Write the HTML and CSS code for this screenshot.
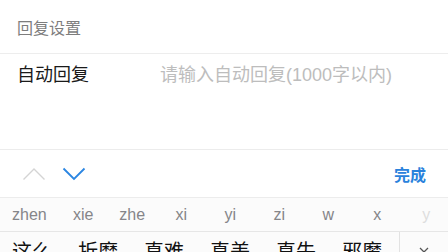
FILE: index.html
```html
<!DOCTYPE html>
<html>
  <head>
    <meta charset="UTF-8">
    <meta name="viewport" content="width=device-width, initial-scale=1.0">
    <link rel="stylesheet" href="styles.css">
  </head>
  <body>
    <div class="form">
      <div class="sectionTitle">回复设置</div>
      <div class="replyRow">
        <div class="replyLabel">自动回复</div>
        <div class="replyInput">请输入自动回复(1000字以内)</div>
      </div>
    </div>

    <div class="toolbar">
      <svg class="arrow" width="24" height="14" viewBox="0 0 24 14">
        <polyline points="1.5,12.5 12,2 22.5,12.5" fill="none" stroke="#d4d4d4" stroke-width="1.4"/>
      </svg>
      <svg class="arrow" width="24" height="14" viewBox="0 0 24 14">
        <polyline points="1.5,1.5 12,12 22.5,1.5" fill="none" stroke="#2b86e2" stroke-width="1.8"/>
      </svg>
      <div class="toolbarDone">完成</div>
    </div>

    <div class="keyboard">
      <div class="pinyinRow">
        <span class="pinyin pinyinFirst">zhen</span>
        <span class="pinyin">xie</span>
        <span class="pinyin">zhe</span>
        <span class="pinyin">xi</span>
        <span class="pinyin">yi</span>
        <span class="pinyin">zi</span>
        <span class="pinyin">w</span>
        <span class="pinyin">x</span>
        <span class="pinyin pinyinFaded">y</span>
      </div>
      <div class="candidateRow">
        <div class="candidates">
          <span class="candidate">这么</span>
          <span class="candidate">折磨</span>
          <span class="candidate">真难</span>
          <span class="candidate">真美</span>
          <span class="candidate">真失</span>
          <span class="candidate">邪魔</span>
        </div>
        <div class="candidateMore">
          <svg width="10" height="6" viewBox="0 0 10 6">
            <polyline points="1,1 5,5 9,1" fill="none" stroke="#555" stroke-width="1.3"/>
          </svg>
        </div>
      </div>
    </div>
  </body>
</html>
```

FILE: styles.css
```css
html {
  font-family: "Liberation Sans", "Noto Sans CJK SC", sans-serif;
  width: 100%;
  height: 100%;
  margin: 0;
  padding: 0;
  overflow: hidden;
}
body {
  width: 100%;
  height: 100%;
  margin: 0;
  padding: 0;
  background: #fff;
}

.form {
  height: 150px;
  border-bottom: 1px solid #ececec;
  box-sizing: border-box;
}
.sectionTitle {
  height: 54px;
  display: flex;
  align-items: center;
  padding-left: 17px;
  font-size: 16px;
  color: #7d7d7d;
  border-bottom: 1px solid #ededed;
  box-sizing: border-box;
}
.replyRow {
  display: flex;
  padding: 9px 0 0 17px;
  font-size: 18px;
  line-height: 24px;
}
.replyLabel {
  width: 143px;
  color: #1a1a1a;
}
.replyInput {
  color: #bdbdbd;
}

.toolbar {
  height: 47px;
  display: flex;
  align-items: center;
  padding: 0 22px;
  gap: 16px;
  border-bottom: 1px solid #ececec;
}
.arrow {
  display: block;
}
.toolbarDone {
  margin-left: auto;
  color: #2a82dc;
  font-size: 16px;
  font-weight: bold;
}

.keyboard {
  background: #fbfbfb;
}
.pinyinRow {
  height: 33px;
  display: flex;
  align-items: center;
  padding-left: 12px;
  font-size: 16px;
  color: #858589;
  border-bottom: 1px solid #e6e6e6;
  white-space: nowrap;
}
.pinyin {
  flex: 0 0 49px;
  text-align: center;
}
.pinyinFirst {
  flex: 0 0 auto;
  margin-right: 12px;
}
.pinyinFaded {
  color: #dedede;
}
.candidateRow {
  display: flex;
  height: 40px;
}
.candidates {
  flex: 1;
  display: flex;
  gap: 26px;
  padding: 5px 0 0 12px;
  font-size: 20px;
  line-height: 28px;
  color: #111;
  border-right: 1px solid #e2e2e2;
  font-family: "Noto Sans CJK SC", sans-serif;
}
.candidateMore {
  width: 48px;
  display: flex;
  justify-content: center;
  padding-top: 15px;
}
```
